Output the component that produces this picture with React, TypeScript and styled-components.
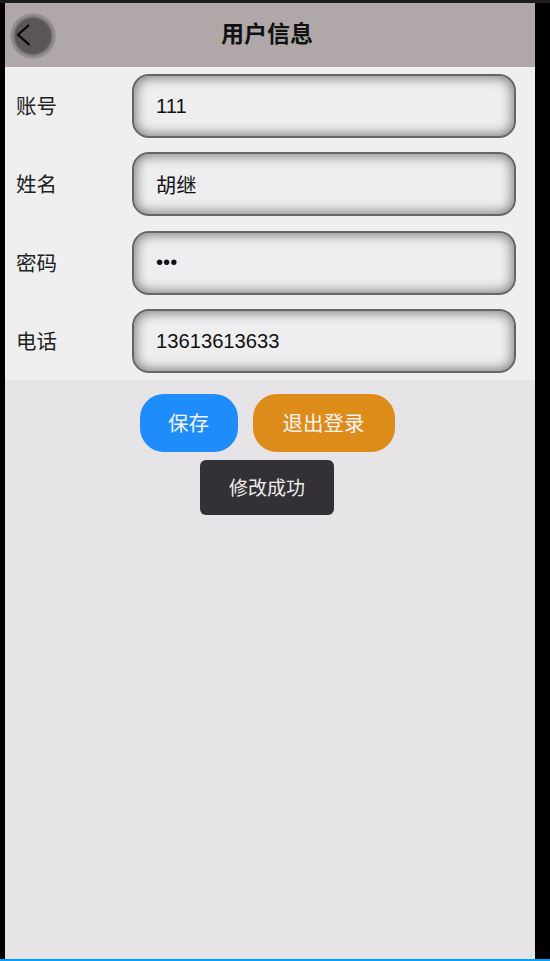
import styled, { createGlobalStyle } from "styled-components";

const GlobalStyle = createGlobalStyle`
  html, body {
    margin: 0;
    padding: 0;
    height: 100%;
    background: #000;
  }
  * {
    box-sizing: border-box;
  }
`;

const fields = [
  { label: "账号", type: "text", value: "111" },
  { label: "姓名", type: "text", value: "胡继" },
  { label: "密码", type: "password", value: "111" },
  { label: "电话", type: "text", value: "13613613633" },
];

const App = () => {
  return (
    <>
      <GlobalStyle />
      <Screen>
        <Page>
          <Header>
            <BackButton aria-label="返回">
              <svg width="14" height="22" viewBox="0 0 14 22" fill="none">
                <path d="M13 1 L2 10.8 L13.5 21" stroke="#000" strokeWidth="2" />
              </svg>
            </BackButton>
            <Title>用户信息</Title>
          </Header>
          <Form>
            {fields.map((f) => (
              <Row key={f.label}>
                <Label>{f.label}</Label>
                <Input type={f.type} defaultValue={f.value} readOnly />
              </Row>
            ))}
          </Form>
          <Actions>
            <Button $bg="#1e8cfa" $width={98}>保存</Button>
            <Button $bg="#dd8c1a" $width={142}>退出登录</Button>
          </Actions>
          <Toast>修改成功</Toast>
        </Page>
        <BottomLine />
      </Screen>
    </>
  );
};

const Screen = styled.div`
  height: 961px;
  display: flex;
  flex-direction: column;
  background: #000;
  border-top: 3px solid #1c1c1c;
  font-family: "Liberation Sans", "Noto Sans CJK SC", sans-serif;
`;
const Page = styled.div`
  flex: 1;
  width: 530px;
  margin-left: 5px;
  background: #e6e4e7;
  display: flex;
  flex-direction: column;
  align-items: center;
`;
const Header = styled.div`
  width: 100%;
  height: 64px;
  background: #b0a8a8;
  display: flex;
  align-items: center;
  justify-content: center;
  position: relative;
`;
const BackButton = styled.button`
  position: absolute;
  left: 5px;
  top: 10px;
  width: 46px;
  height: 46px;
  padding: 0 20px 2px 0;
  border: none;
  border-radius: 50%;
  background: radial-gradient(circle, #5a5556 0, #5a5556 17px, #757071 19px, #8f8a8a 20px, #928d8d 22px, #a39d9d 23px);
  display: flex;
  align-items: center;
  justify-content: center;
`;
const Title = styled.h1`
  margin: 0 6px 6px 0;
  font-size: 23px;
  font-weight: 700;
  color: #111;
`;
const Form = styled.div`
  width: 100%;
  height: 313px;
  background: #efeff0;
  padding-top: 7px;
  display: flex;
  flex-direction: column;
  gap: 14.4px;
`;
const Row = styled.div`
  display: flex;
  align-items: center;
  height: 64px;
`;
const Label = styled.div`
  width: 127px;
  padding: 0 0 2px 11px;
  font-size: 20.5px;
  color: #222;
`;
const Input = styled.input`
  width: 384px;
  height: 64px;
  border: 2px solid #666;
  border-radius: 17px;
  background: #eeedef;
  box-shadow: inset 0 0 12px 2px #808080;
  padding: 0 22px;
  font-family: inherit;
  font-size: 20.2px;
  color: #111;
  outline: none;
`;
const Actions = styled.div`
  display: flex;
  justify-content: center;
  gap: 15px;
  margin: 14px 6px 0 0;
`;
const Button = styled.button<{ $bg: string; $width: number }>`
  width: ${(p) => p.$width}px;
  height: 58px;
  padding: 0 0 2px;
  border: none;
  border-radius: 24px;
  background: ${(p) => p.$bg};
  color: #f4f4f4;
  font-family: inherit;
  font-size: 20.5px;
`;
const Toast = styled.div`
  width: 134px;
  height: 55px;
  margin: 8px 6px 0 0;
  padding-bottom: 2px;
  border-radius: 6px;
  background: #333135;
  color: #eee;
  font-size: 19px;
  display: flex;
  align-items: center;
  justify-content: center;
`;
const BottomLine = styled.div`
  height: 2px;
  background: #00a2ff;
`;

export default App;
